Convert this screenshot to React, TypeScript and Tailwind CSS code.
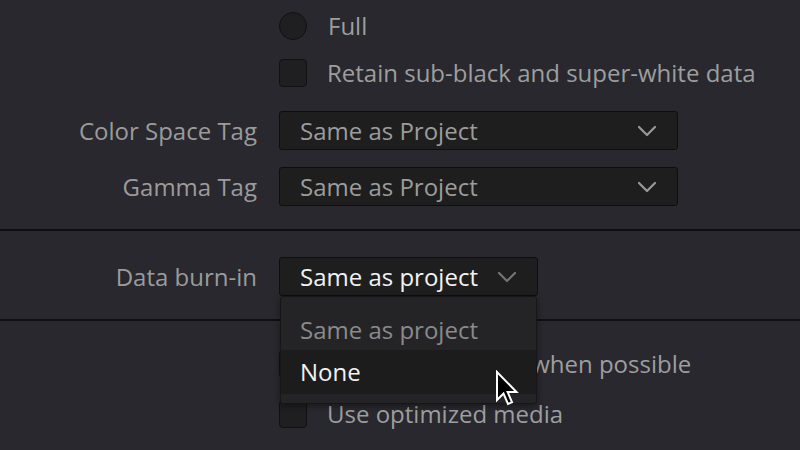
import React from "react";

const Chevron = ({ color }: { color: string }) => (
  <svg width="20" height="12" viewBox="0 0 20 12" fill="none">
    <path d="M2 2 L10 10 L18 2" stroke={color} strokeWidth="2.2" strokeLinecap="round" strokeLinejoin="round" />
  </svg>
);

const Check = () => (
  <div className="w-[28px] h-[28px] rounded-[4px] bg-[#1f1f21] border border-[#111113] shrink-0" />
);

const Select = ({ text, wide, bright }: { text: string; wide?: boolean; bright?: boolean }) => (
  <div
    className={`${wide ? "w-[399px]" : "w-[259px]"} h-[39px] rounded-[3px] bg-[#1e1e1f] border border-[#0e0e0f] flex items-center justify-between pl-[20px] pr-[20px]`}
  >
    <span className={bright ? "text-[#f2f2f2]" : "text-[#9c9c9c]"}>{text}</span>
    <Chevron color={bright ? "#747474" : "#9a9a9a"} />
  </div>
);

export default function App() {
  return (
    <div className="relative w-[800px] h-[450px] overflow-hidden bg-[#28282e] font-['Open_Sans',sans-serif] text-[24px] leading-none">
      <div className="flex flex-col pt-[12px]">
        <div className="pl-[279px] flex items-center gap-[21px] h-[28px]">
          <div className="w-[28px] h-[28px] rounded-full bg-[#1f1f21] border border-[#111113]" />
          <span className="text-[#9e9e9e]">Full</span>
        </div>
        <div className="pl-[279px] mt-[19px] flex items-center gap-[20px] h-[28px]">
          <Check />
          <span className="text-[#9e9e9e]">Retain sub-black and super-white data</span>
        </div>
        <div className="mt-[24px] flex items-center">
          <span className="w-[257px] text-right text-[#9b9b9b]">Color Space Tag</span>
          <div className="ml-[22px]">
            <Select text="Same as Project" wide />
          </div>
        </div>
        <div className="mt-[17px] flex items-center">
          <span className="w-[257px] text-right text-[#9b9b9b]">Gamma Tag</span>
          <div className="ml-[22px]">
            <Select text="Same as Project" wide />
          </div>
        </div>
        <div className="mt-[23px] h-[2px] bg-[#0f0f11]" />
        <div className="mt-[26px] flex items-center">
          <span className="w-[257px] text-right text-[#9b9b9b]">Data burn-in</span>
          <div className="ml-[22px]">
            <Select text="Same as project" bright />
          </div>
        </div>
        <div className="mt-[23px] h-[2px] bg-[#0f0f11]" />
        <div className="pl-[279px] mt-[29px] flex items-center gap-[20px] h-[28px]">
          <Check />
          <span className="text-[#9e9e9e]">Bypass re-encode when possible</span>
        </div>
        <div className="pl-[279px] mt-[22px] flex items-center gap-[20px] h-[28px]">
          <Check />
          <span className="text-[#9e9e9e]">Use optimized media</span>
        </div>
      </div>

      <div className="absolute left-[280px] top-[296px] w-[257px] h-[108px] bg-[#242427] border border-[#161618] rounded-[3px] flex flex-col pt-[13px] shadow-[0_2px_6px_rgba(0,0,0,0.4)]">
        <div className="h-[40px] flex items-center pl-[19px] text-[#8a8a8a]">Same as project</div>
        <div className="h-[44px] flex items-center pl-[19px] bg-[#1c1c1d] text-[#f2f2f2]">None</div>
      </div>

      <svg className="absolute left-[495px] top-[370px]" width="26" height="38" viewBox="0 0 26 38">
        <path
          d="M2 2 L2 30 L8.5 23.5 L13 34 L17 32.2 L12.6 22 L21.5 22 Z"
          fill="#000"
          stroke="#fff"
          strokeWidth="2"
          strokeLinejoin="miter"
        />
      </svg>
    </div>
  );
}
